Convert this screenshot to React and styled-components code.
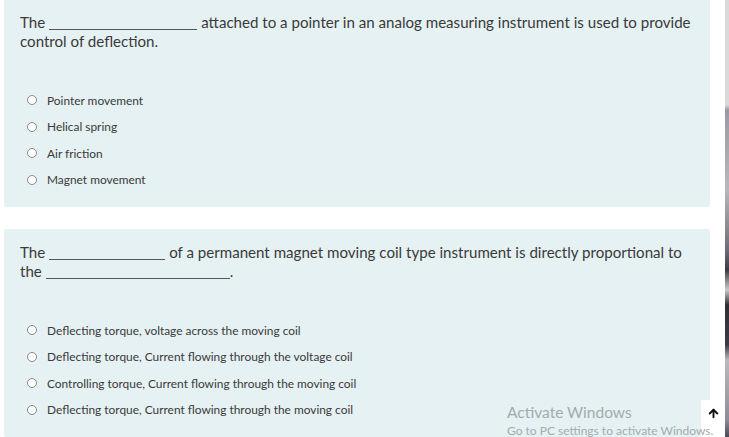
import styled, { createGlobalStyle } from "styled-components";
import { ArrowUp } from "lucide-react";

const GlobalStyle = createGlobalStyle`
  html, body {
    margin: 0;
    padding: 0;
    background: #ffffff;
    overflow: hidden;
  }
  body {
    font-family: Lato, "Open Sans", sans-serif;
    color: #3a3a3a;
  }
`;

const Page = styled.div`
  position: relative;
  display: flex;
  width: 729px;
  height: 437px;
  overflow: hidden;
`;

const Content = styled.div`
  flex: 1;
  display: flex;
  flex-direction: column;
  gap: 22px;
  padding: 0 15px 0 4px;
`;

const Strip = styled.div`
  width: 4px;
  background: linear-gradient(
    to bottom,
    #d9d9dc 0px,
    #d9d9dc 105px,
    #9a9aa2 110px,
    #b7b7bd 190px,
    #6d6d75 250px,
    #3b3b42 270px,
    #c9c9cd 290px,
    #2f2f36 305px,
    #3c3c44 345px,
    #b9b9bf 360px,
    #8d8d95 420px,
    #4a4a52 437px
  );
`;

const Card = styled.div`
  background: #e6f1f3;
  padding: 14px 16px;
  border-radius: 2px;
  &:first-child {
    margin-top: -1px;
  }
`;

const Question = styled.div`
  font-size: 15.1px;
  line-height: 19px;
  white-space: nowrap;
  margin-bottom: 36px;
`;

const Blank = styled.span`
  display: inline-block;
  width: ${(p) => p.$w}px;
  border-bottom: 1px solid #555;
  height: 13px;
  vertical-align: -2px;
  margin: 0 ${(p) => p.$gap ?? 4}px 0 4px;
`;

const Options = styled.div`
  display: flex;
  flex-direction: column;
`;

const Option = styled.label`
  display: flex;
  align-items: center;
  height: 26.5px;
  font-size: 11.9px;
  color: #3a3a3a;
`;

const Radio = styled.span`
  width: 8px;
  height: 8px;
  border: 1px solid #8a8a8a;
  border-radius: 50%;
  background: #fff;
  margin: 0 10px 0 7px;
  flex-shrink: 0;
`;

const Watermark = styled.div`
  position: absolute;
  z-index: 2;
  left: 507px;
  top: 405px;
  color: #a3abae;
  line-height: 1;
  white-space: nowrap;
`;

const WatermarkTitle = styled.div`
  font-size: 15.5px;
  margin-bottom: 4px;
`;

const WatermarkSub = styled.div`
  font-size: 12px;
`;

const TopButton = styled.button`
  position: absolute;
  z-index: 1;
  left: 701px;
  top: 400px;
  width: 24px;
  height: 37px;
  border: none;
  background: #ffffff;
  display: flex;
  align-items: center;
  justify-content: center;
  padding: 0;
  padding-bottom: 10px;
  color: #111;
`;

const questions = [
  {
    lines: [
      <>
        The<Blank $w={148} />attached to a pointer in an analog measuring
        instrument is used to provide
      </>,
      <>control of deflection.</>,
    ],
    options: [
      "Pointer movement",
      "Helical spring",
      "Air friction",
      "Magnet movement",
    ],
  },
  {
    lines: [
      <>
        The<Blank $w={116} />of a permanent magnet moving coil type instrument
        is directly proportional to
      </>,
      <>
        the<Blank $w={184} $gap={0} />.
      </>,
    ],
    options: [
      "Deflecting torque, voltage across the moving coil",
      "Deflecting torque, Current flowing through the voltage coil",
      "Controlling torque, Current flowing through the moving coil",
      "Deflecting torque, Current flowing through the moving coil",
    ],
  },
];

const App = () => {
  return (
    <Page>
      <GlobalStyle />
      <Content>
        {questions.map((q, i) => (
          <Card key={i}>
            <Question>
              {q.lines.map((line, j) => (
                <div key={j}>{line}</div>
              ))}
            </Question>
            <Options>
              {q.options.map((opt) => (
                <Option key={opt}>
                  <Radio />
                  {opt}
                </Option>
              ))}
            </Options>
          </Card>
        ))}
      </Content>
      <Strip />
      <Watermark>
        <WatermarkTitle>Activate Windows</WatermarkTitle>
        <WatermarkSub>Go to PC settings to activate Windows.</WatermarkSub>
      </Watermark>
      <TopButton>
        <ArrowUp size={13} strokeWidth={3.5} />
      </TopButton>
    </Page>
  );
};

export default App;
